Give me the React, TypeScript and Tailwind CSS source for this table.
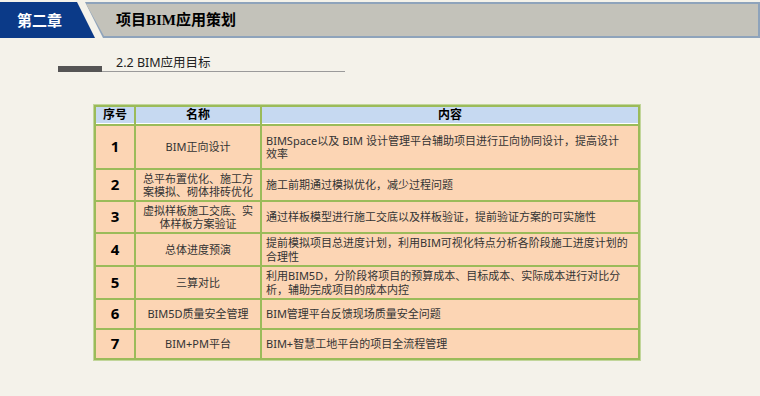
const rows: { no: string; name: string[]; content: string[] }[] = [
  {
    no: "1",
    name: ["BIM正向设计"],
    content: ["BIMSpace以及 BIM 设计管理平台辅助项目进行正向协同设计，提高设计", "效率"],
  },
  { no: "2", name: ["总平布置优化、施工方", "案模拟、砌体排砖优化"], content: ["施工前期通过模拟优化，减少过程问题"] },
  { no: "3", name: ["虚拟样板施工交底、实", "体样板方案验证"], content: ["通过样板模型进行施工交底以及样板验证，提前验证方案的可实施性"] },
  {
    no: "4",
    name: ["总体进度预演"],
    content: ["提前模拟项目总进度计划，利用BIM可视化特点分析各阶段施工进度计划的", "合理性"],
  },
  {
    no: "5",
    name: ["三算对比"],
    content: ["利用BIM5D，分阶段将项目的预算成本、目标成本、实际成本进行对比分", "析，辅助完成项目的成本内控"],
  },
  { no: "6", name: ["BIM5D质量安全管理"], content: ["BIM管理平台反馈现场质量安全问题"] },
  { no: "7", name: ["BIM+PM平台"], content: ["BIM+智慧工地平台的项目全流程管理"] },
];

const cell = "bg-[#fcd5b4] flex items-center";

export default function App() {
  return (
    <div className="relative h-[396px] w-[760px] overflow-hidden bg-[#f4f2ea] font-['Noto_Sans','Noto_Sans_CJK_SC',sans-serif]">
      {/* chapter banner */}
      <div className="mt-[2px] flex h-[36px]">
        <div className="flex w-[96px] shrink-0 items-center bg-[#0b3a88] pl-[17px] text-[15px] font-bold text-white [clip-path:polygon(0_0,77px_0,95px_100%,0_100%)]">
          第二章
        </div>
        <div className="-ml-[11px] flex-1 bg-[#8ea3bb] py-[2px] pr-[2px] [clip-path:polygon(0_0,100%_0,100%_100%,18px_100%)]">
          <div className="flex h-full items-center bg-[#c3c2ba] pl-[31px] font-['Liberation_Serif','Noto_Sans_CJK_SC',serif] text-[15px] font-bold text-black [clip-path:polygon(1px_0,100%_0,100%_100%,19px_100%)]">
            项目BIM应用策划
          </div>
        </div>
      </div>

      {/* section heading */}
      <div className="mt-[17px] flex items-end pl-[58px]">
        <div className="h-[6px] w-[44px] bg-[#555555]" />
        <div className="w-[243px] border-b border-[#9a9a9a] pl-[14px] text-[12.5px] leading-[16px] text-[#222]">
          2.2 BIM应用目标
        </div>
      </div>

      {/* table */}
      <div className="ml-[94px] mt-[33px] grid w-[546px] grid-cols-[38px_124px_376px] grid-rows-[17px_42px_30px_30px_31px_31px_28px_28px] gap-[2px] bg-[#9bbb59] p-[2px] text-[11px] leading-[13.5px] text-[#333] shadow-[0_0_0_1px_#c2d69b]">
        <div className="flex items-center justify-center border-b border-white bg-[#c6d9f1] text-[12px] font-bold text-black">序号</div>
        <div className="flex items-center justify-center border-b border-white bg-[#c6d9f1] text-[12px] font-bold text-black">名称</div>
        <div className="flex items-center justify-center border-b border-white bg-[#c6d9f1] text-[12px] font-bold text-black">内容</div>
        {rows.map((r) => (
          <div key={r.no} className="contents">
            <div className={`${cell} justify-center text-[15px] font-bold text-black`}>{r.no}</div>
            <div className={`${cell} flex-col justify-center text-center`}>
              {r.name.map((l) => (
                <span key={l}>{l}</span>
              ))}
            </div>
            <div className={`${cell} flex-col items-start justify-center pl-[4px]`}>
              {r.content.map((l) => (
                <span key={l}>{l}</span>
              ))}
            </div>
          </div>
        ))}
      </div>
    </div>
  );
}
